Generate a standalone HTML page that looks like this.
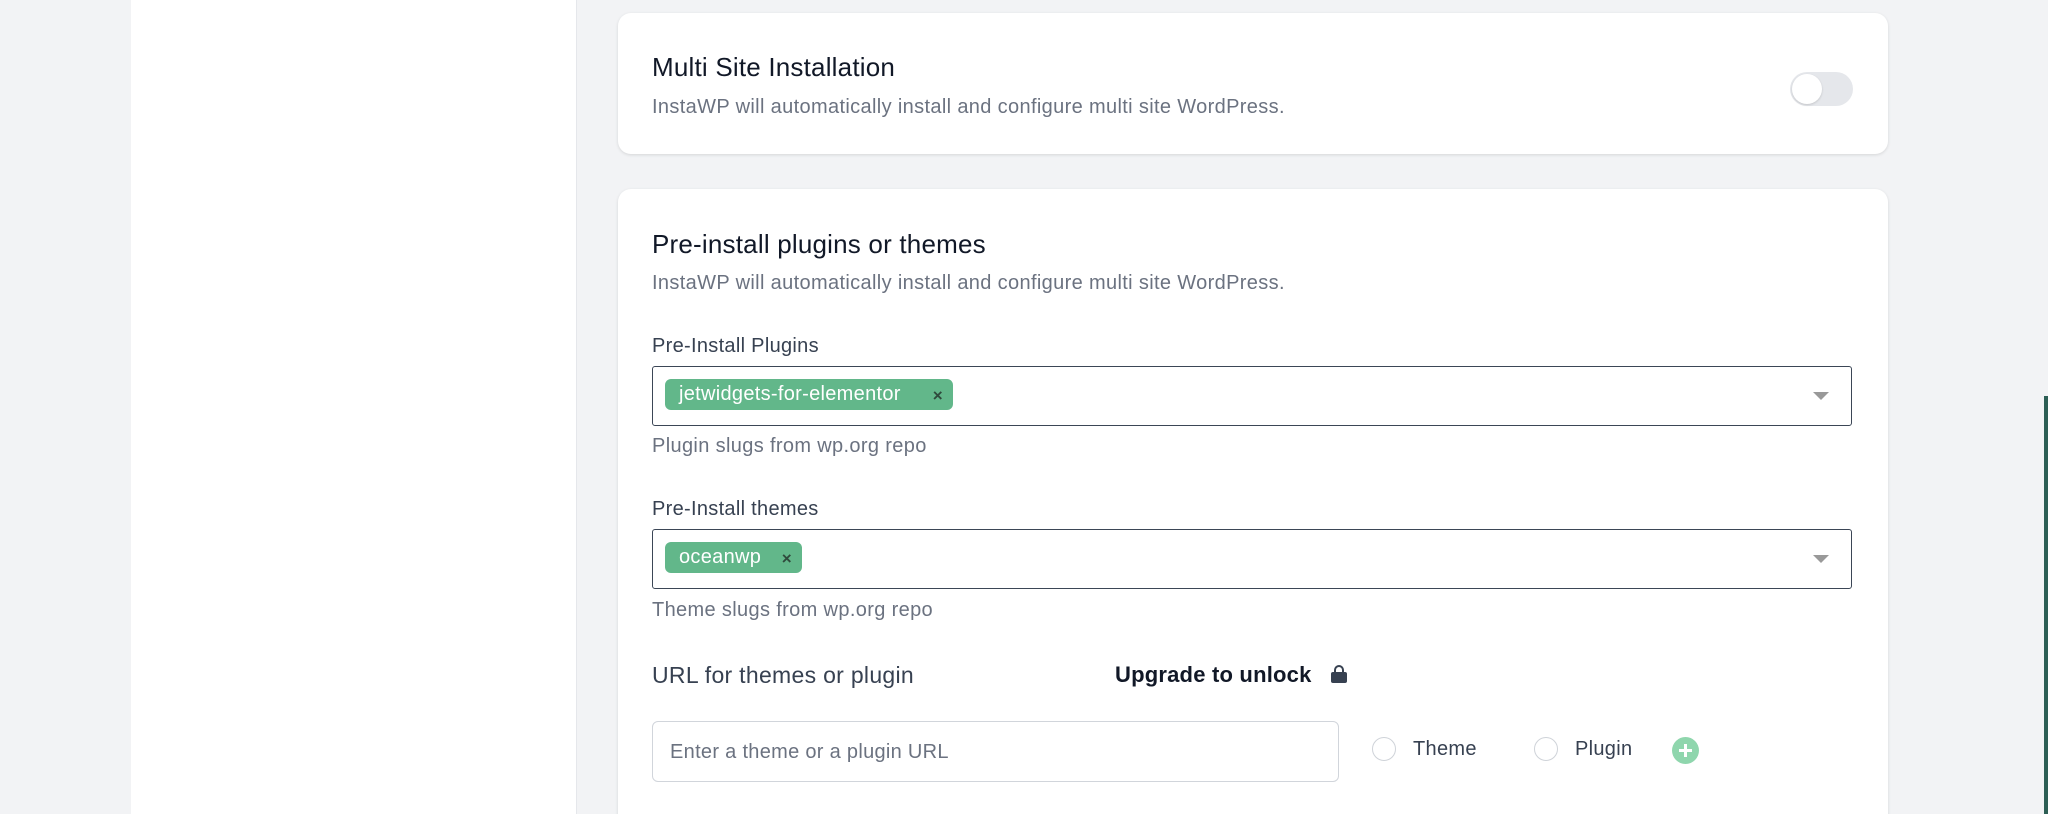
<!DOCTYPE html>
<html><head><meta charset="utf-8"><style>
*{box-sizing:border-box;margin:0;padding:0}
html,body{width:2048px;height:814px;overflow:hidden}
body{background:#f2f3f5;font-family:"Liberation Sans",sans-serif}
#w{position:relative;width:2048px;height:814px;overflow:hidden}
.abs{position:absolute;white-space:nowrap}
.panel{position:absolute;left:131px;top:0;width:446px;height:814px;background:#fff;border-right:1px solid #e5e7eb}
.card{position:absolute;left:618px;width:1270px;background:#fff;border-radius:13px;box-shadow:0 1px 3px rgba(0,0,0,.12)}
.h{font-size:26px;color:#111827;letter-spacing:.2px}
.d{font-size:20px;color:#6b7280;letter-spacing:.35px}
.l{font-size:20px;color:#374151;letter-spacing:.3px}
.sel{position:absolute;left:652px;width:1200px;height:60px;border:1.5px solid #3b4656;border-radius:3px;background:#fff}
.tag{position:absolute;left:12px;top:12px;height:31px;background:#62b78a;border-radius:6px;color:#fff;font-size:20px;line-height:31px;padding-left:14px;letter-spacing:.3px}
.tag b{position:absolute;right:10px;top:1px;color:#2f4a3c;font-size:17px}
.arr{position:absolute;right:22px;top:25px;width:0;height:0;border-left:8px solid transparent;border-right:8px solid transparent;border-top:8px solid #999}
.radio{position:absolute;width:24px;height:24px;border:1.5px solid #cfd3d9;border-radius:50%;background:#fff}
</style></head><body><div id="w">
<div class="panel"></div>
<div class="card" style="top:13px;height:141px"></div>
<div class="card" style="top:189px;height:640px"></div>
<div class="abs h" style="left:652px;top:52px">Multi Site Installation</div>
<div class="abs d" style="left:652px;top:96px">InstaWP will automatically install and configure multi site WordPress.</div>
<div class="abs" style="left:1790px;top:72px;width:63px;height:34px;border-radius:17px;background:#e5e7eb"></div>
<div class="abs" style="left:1792px;top:74px;width:30px;height:30px;border-radius:50%;background:#fff;box-shadow:0 1px 2px rgba(0,0,0,.15)"></div>

<div class="abs h" style="left:652px;top:229px">Pre-install plugins or themes</div>
<div class="abs d" style="left:652px;top:272px">InstaWP will automatically install and configure multi site WordPress.</div>
<div class="abs l" style="left:652px;top:335px">Pre-Install Plugins</div>
<div class="sel" style="top:366px"><div class="tag" style="width:288px">jetwidgets-for-elementor<b>×</b></div><div class="arr"></div></div>
<div class="abs d" style="left:652px;top:435px">Plugin slugs from wp.org repo</div>
<div class="abs l" style="left:652px;top:498px">Pre-Install themes</div>
<div class="sel" style="top:529px"><div class="tag" style="width:137px">oceanwp<b>×</b></div><div class="arr"></div></div>
<div class="abs d" style="left:652px;top:599px">Theme slugs from wp.org repo</div>

<div class="abs" style="left:652px;top:662px;font-size:23px;color:#374151;letter-spacing:.3px">URL for themes or plugin</div>
<div class="abs" style="left:1115px;top:662px;font-size:22px;color:#111827;font-weight:bold;letter-spacing:.2px">Upgrade to unlock</div>
<div class="abs" style="left:1331px;top:665px;width:16px;height:18px">
<div style="position:absolute;left:3px;top:0;width:10px;height:11px;border:2.5px solid #374151;border-radius:5px 5px 0 0"></div>
<div style="position:absolute;left:0;top:7px;width:16px;height:11px;background:#374151;border-radius:2px"></div></div>

<div class="abs" style="left:652px;top:721px;width:687px;height:61px;border:1.5px solid #d1d5db;border-radius:6px;background:#fff"></div>
<div class="abs" style="left:670px;top:741px;font-size:20px;color:#6b7280;letter-spacing:.3px">Enter a theme or a plugin URL</div>
<div class="radio" style="left:1372px;top:737px"></div>
<div class="abs l" style="left:1413px;top:738px">Theme</div>
<div class="radio" style="left:1534px;top:737px"></div>
<div class="abs l" style="left:1575px;top:738px">Plugin</div>
<div class="abs" style="left:1672px;top:737px;width:27px;height:27px;border-radius:50%;background:#8fd6ad"></div>
<div class="abs" style="left:1679px;top:749px;width:13px;height:3px;background:#fff"></div>
<div class="abs" style="left:1684px;top:744px;width:3px;height:13px;background:#fff"></div>

<div class="abs" style="left:2044px;top:396px;width:4px;height:418px;background:#2d5f55"></div>
</div></body></html>
